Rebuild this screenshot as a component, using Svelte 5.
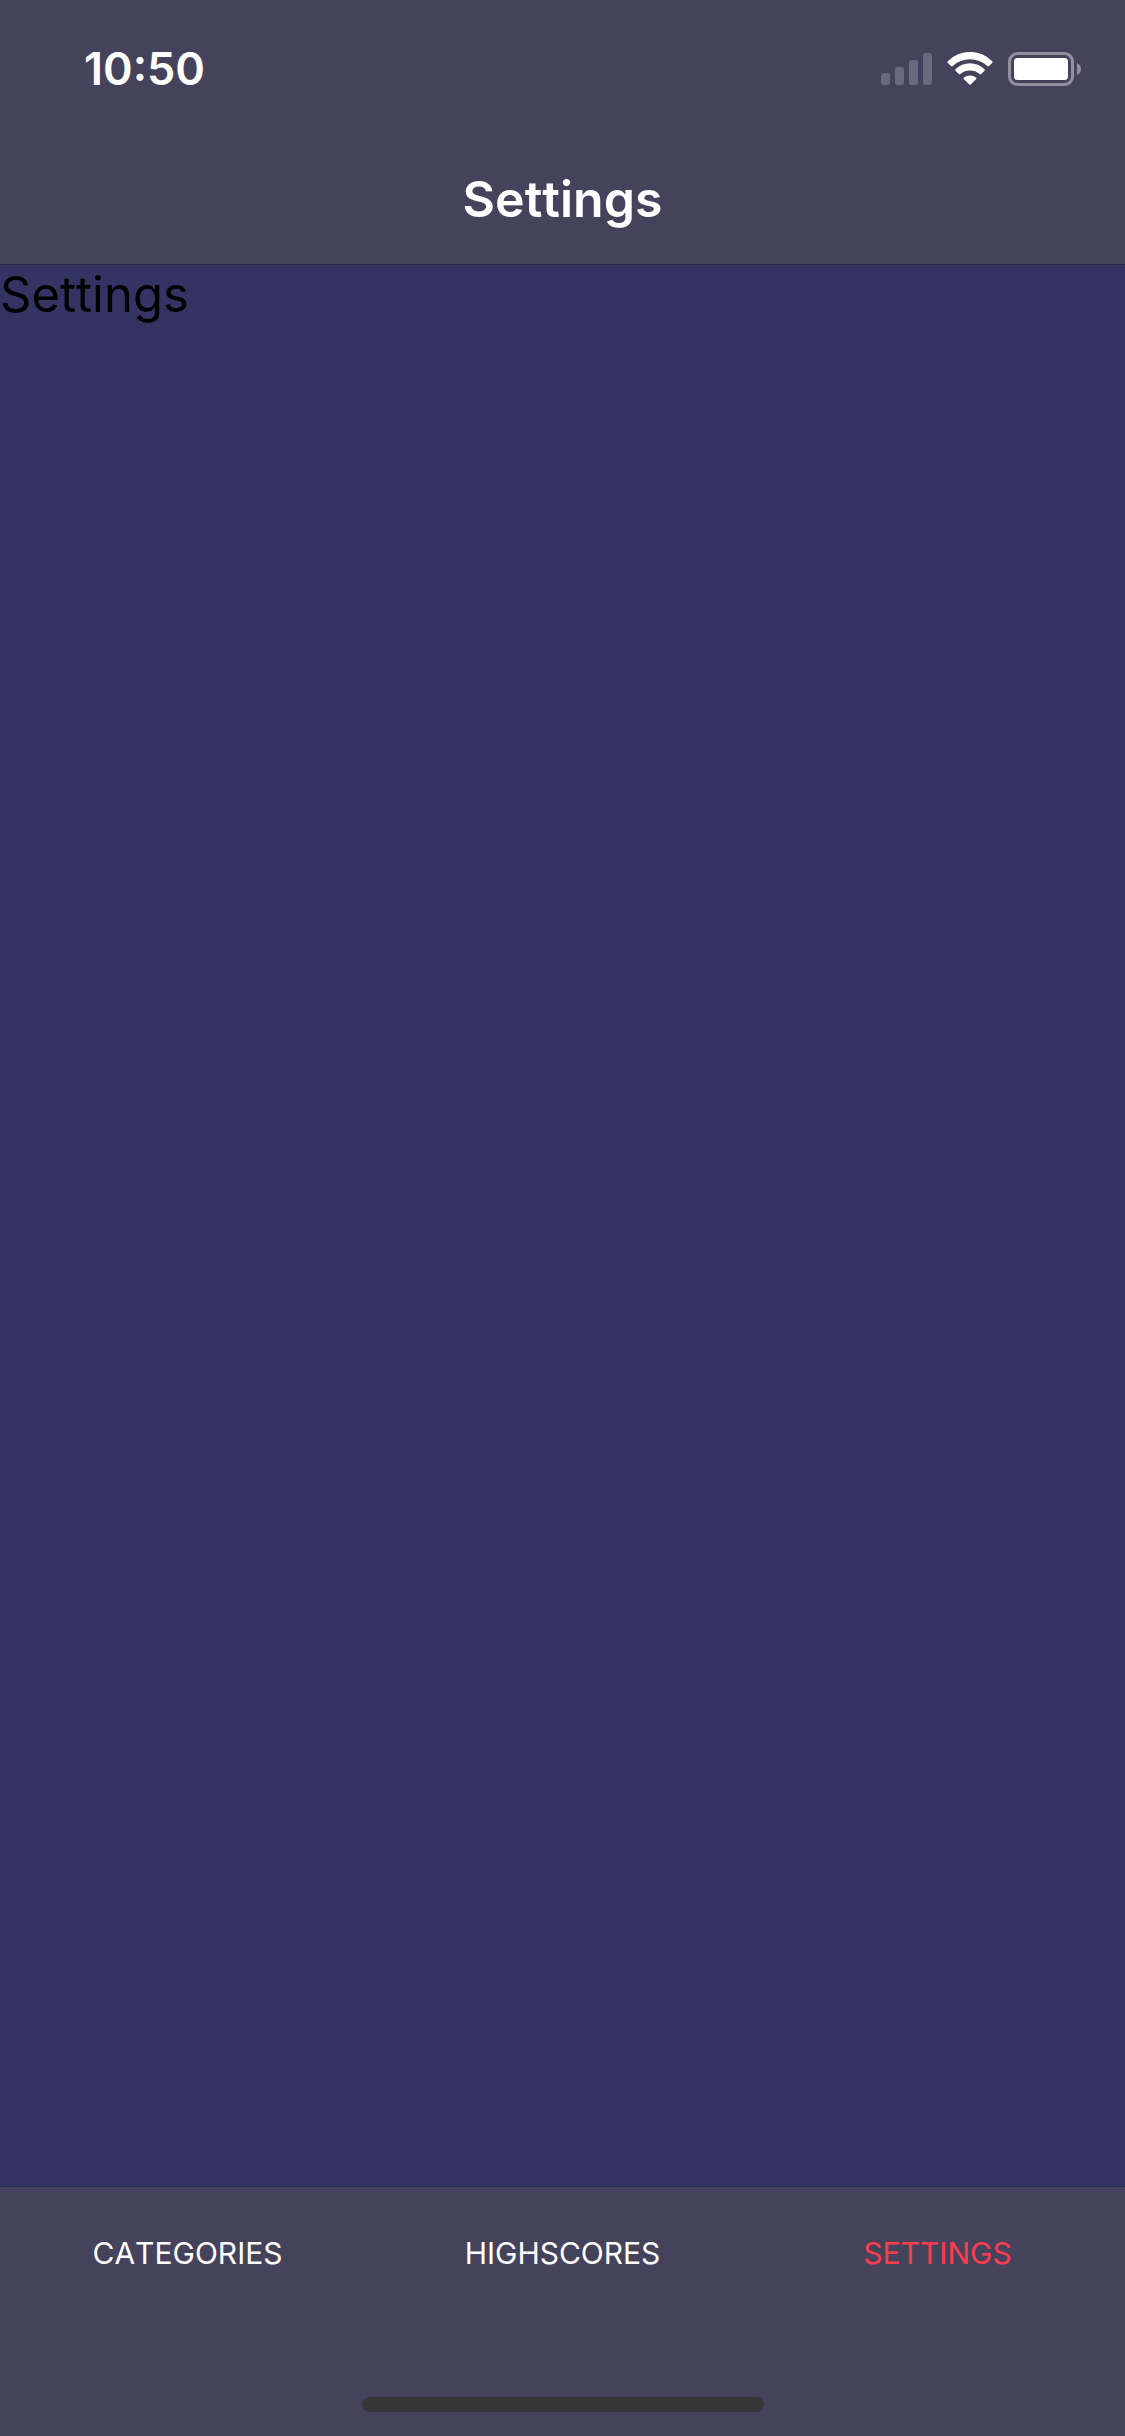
<script>
    const tabs = ["Categories", "Highscores", "Settings"];
    const barHeights = [12, 18, 25, 32];

    let active = "Settings";
    let time = "10:50";
</script>

<svelte:head>
    <title>{active}</title>
</svelte:head>

<div class="screen">
    <header>
        <div class="status">
            <time>{time}</time>
            <div class="icons">
                <svg class="signal" width="51" height="32" viewBox="0 0 51 32">
                    {#each barHeights as height, i}
                        <rect x={i * 14} y={32 - height} width="9" {height} rx="2.5" />
                    {/each}
                </svg>
                <svg width="46" height="34" viewBox="0 0 46 34">
                    <path
                        d="M.8 9.3A31 31 0 0 1 45.2 9.3Q46 10 45.3 10.8L42 14Q41.2 14.7 40.4 14A26 26 0 0 0 5.6 14Q4.8 14.7 4 14L.7 10.8Q0 10 .8 9.3Z"
                    />
                    <path
                        d="M8.5 17.3A20.5 20.5 0 0 1 37.5 17.3Q38.2 18 37.5 18.8L34.2 22Q33.4 22.7 32.6 22A15 15 0 0 0 13.4 22Q12.6 22.7 11.8 22L8.5 18.8Q7.8 18 8.5 17.3Z"
                    />
                    <path
                        d="M16.9 25.5A10 10 0 0 1 29.1 25.5Q29.9 26.2 29.2 27L23.7 32.6Q23 33.2 22.3 32.6L16.8 27Q16.1 26.2 16.9 25.5Z"
                    />
                </svg>
                <svg width="73" height="34" viewBox="0 0 73 34">
                    <rect
                        class="shell"
                        x="1.5"
                        y="1.5"
                        width="63"
                        height="31"
                        rx="8"
                    />
                    <rect x="6" y="6" width="54" height="22" rx="3.5" />
                    <path class="nub" d="M69 11Q73 13 73 17T69 23Z" />
                </svg>
            </div>
        </div>
        <h1>{active}</h1>
    </header>

    <main>
        <p>{active}</p>
    </main>

    <footer>
        <nav>
            {#each tabs as tab}
                <button
                    class:active={tab === active}
                    on:click={() => (active = tab)}>{tab}</button
                >
            {/each}
        </nav>
        <div class="homeIndicator"></div>
    </footer>
</div>

<style>
    :global(body) {
        margin: 0;
        background-color: #343464;
    }
    .screen {
        display: flex;
        flex-direction: column;
        min-height: 100vh;
        background-color: #343464;
        font-family: Inter, Roboto, sans-serif;
        font-kerning: none;
    }
    header {
        background-color: #44435b;
        border-bottom: 1px solid #262648;
        color: white;
    }
    .status {
        display: flex;
        justify-content: space-between;
        align-items: center;
        height: 138px;
        padding: 0 44px 0 84px;
    }
    time {
        font-size: 45px;
        line-height: 54px;
        font-weight: 600;
    }
    .icons {
        display: flex;
        align-items: center;
        gap: 15px;
        fill: white;
    }
    .signal {
        fill: #6b697d;
    }
    .shell {
        fill: none;
        stroke: #918fa0;
        stroke-width: 3;
    }
    .nub {
        fill: #918fa0;
    }
    h1 {
        margin: 0;
        height: 126px;
        line-height: 122px;
        text-align: center;
        font-size: 50px;
        font-weight: 600;
    }
    main {
        flex: 1;
    }
    p {
        margin: 0;
        color: black;
        font-size: 49px;
        line-height: 60px;
    }
    footer {
        background-color: #44435b;
        border-top: 1px solid #262648;
    }
    nav {
        display: flex;
        height: 132px;
    }
    button {
        flex: 1;
        padding: 0;
        border: none;
        background: none;
        color: white;
        font-family: inherit;
        font-size: 30px;
        font-kerning: inherit;
        text-transform: uppercase;
    }
    button.active {
        color: #fe3c4c;
    }
    .homeIndicator {
        width: 402px;
        height: 15px;
        margin: 78px auto 24px;
        border-radius: 8px;
        background-color: #363636;
    }
</style>
